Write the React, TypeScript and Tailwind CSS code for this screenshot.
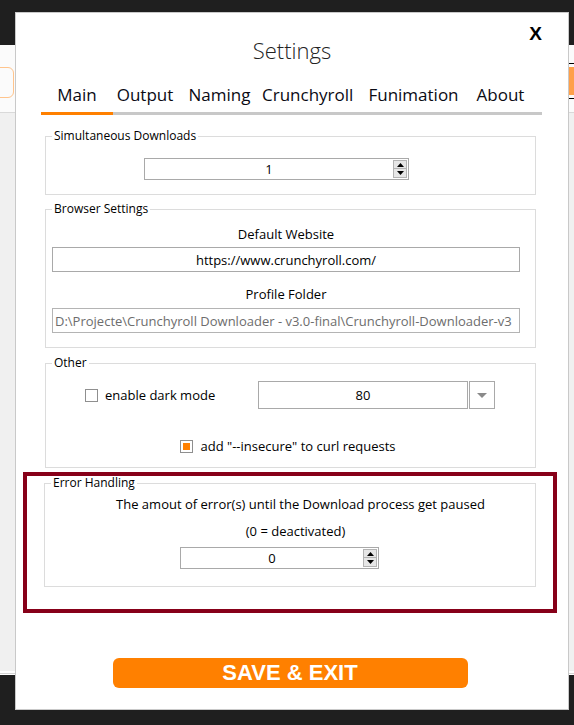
import React from 'react';

const Arrow = ({ up }: { up?: boolean }) => (
  <svg width="7" height="4" viewBox="0 0 7 4" className="block">
    <path d={up ? 'M3.5 0L7 4H0z' : 'M0 0h7L3.5 4z'} fill="#000" />
  </svg>
);

function NumericBox({ value, className }: { value: string; className?: string }) {
  return (
    <div className={`flex h-[22px] items-center border border-[#a9a9a9] bg-white ${className ?? ''}`}>
      <span className="flex-1 text-center text-[13px] leading-none">{value}</span>
      <div className="mr-[1px] flex h-[18px] w-[14px] flex-col">
        <span className="flex h-[9px] items-center justify-center border border-[#b3b3b3] bg-[#e6e6e6]">
          <Arrow up />
        </span>
        <span className="flex h-[9px] items-center justify-center border border-t-0 border-[#b3b3b3] bg-[#e6e6e6]">
          <Arrow />
        </span>
      </div>
    </div>
  );
}

function GroupBox({ title, className, children }: { title: string; className?: string; children: React.ReactNode }) {
  return (
    <fieldset className={`min-w-0 border border-[#dcdcdc] ${className ?? ''}`}>
      <legend className="ml-[6px] px-[2px] text-[12px] leading-[14px] text-black">{title}</legend>
      {children}
    </fieldset>
  );
}

const tabs = [
  { label: 'Main', w: 'w-[72px]' },
  { label: 'Output', w: 'w-[64px]' },
  { label: 'Naming', w: 'w-[85px]' },
  { label: 'Crunchyroll', w: 'w-[91px]' },
  { label: 'Funimation', w: 'w-[121px]' },
  { label: 'About', w: 'w-[53px]' },
];

export default function App() {
  return (
    <div className="relative h-[725px] w-[574px] overflow-hidden bg-[#f0f0f0] font-['Open_Sans',sans-serif] text-black">
      {/* app behind the dialog */}
      <div className="flex h-full flex-col">
        <div className="h-[45px] shrink-0 bg-[#1f1f1f]" />
        <div className="flex h-[68px] shrink-0 items-start justify-between border-b border-[#d9d9d9] bg-[#fbfbfb]">
          <div className="-ml-[8px] mt-[22px] h-[31px] w-[22px] rounded-[6px] border border-[#ffc48c]" />
          <div className="mt-[18px] h-[36px] w-[7px] border-y border-black py-[3px]">
            <div className="ml-[2px] h-full bg-[#ffa04a]" />
          </div>
        </div>
        <div className="flex-1 bg-[#f0f0f0]" />
        <div className="h-[2px] bg-white" />
        <div className="h-[1px] bg-[#d4d4d4]" />
        <div className="h-[1px] bg-white" />
        <div className="h-[50px] shrink-0 bg-[#1f1f1f]" />
      </div>

      {/* settings dialog */}
      <div className="absolute left-[15px] top-[12px] flex h-[698px] w-[554px] flex-col border border-[#c9c9c9] bg-white">
        <button className="absolute right-[26px] top-[11px] font-['Liberation_Sans',Arial,sans-serif] text-[19px] font-bold leading-none text-black">
          X
        </button>

        <h1 className="pt-[22px] text-center text-[22px] font-light leading-[30px] text-[#222]">Settings</h1>

        <div className="ml-[25px] mr-[26px] mt-[18px] flex border-b-[3px] border-[#c8c8c8]">
          {tabs.map((t, i) => (
            <div
              key={t.label}
              className={`-mb-[3px] ${t.w} border-b-[3px] pb-[5px] text-center text-[17px] leading-[24px] text-[#0a0a14] ${
                i === 0 ? 'border-[#ff8000]' : 'border-transparent'
              }`}
            >
              {t.label}
            </div>
          ))}
        </div>

        <div className="ml-[7px] mr-[11px] flex flex-col">
          <GroupBox title="Simultaneous Downloads" className="ml-[22px] mr-[21px] mt-[14px]">
            <div className="flex justify-center pb-[14px] pr-[28px] pt-[15px]">
              <NumericBox value="1" className="w-[265px]" />
            </div>
          </GroupBox>

          <GroupBox title="Browser Settings" className="ml-[22px] mr-[21px] mt-[7px]">
            <div className="flex flex-col pb-[14px] text-[13px] leading-[16px]">
              <div className="mt-[10px] pr-[9px] text-center">Default Website</div>
              <div className="ml-[6px] mr-[15px] mt-[5px] flex h-[25px] items-center justify-center border border-[#a9a9a9]">
                https://www.crunchyroll.com/
              </div>
              <div className="mt-[14px] pr-[9px] text-center">Profile Folder</div>
              <div className="ml-[6px] mr-[15px] mt-[6px] flex h-[25px] min-w-0 items-center overflow-hidden whitespace-nowrap border border-[#b4b4b4] pl-[2px] text-[#6d6d6d]">
                D:\Projecte\Crunchyroll Downloader - v3.0-final\Crunchyroll-Downloader-v3
              </div>
            </div>
          </GroupBox>

          <GroupBox title="Other" className="ml-[22px] mr-[21px] mt-[8px]">
            <div className="flex flex-col pb-[13px] text-[13px] leading-[16px]">
              <div className="mt-[11px] flex h-[28px] items-center">
                <label className="ml-[39px] flex w-[173px] items-center gap-[7px]">
                  <span className="h-[13px] w-[13px] border border-[#8f8f8f] bg-white" />
                  enable dark mode
                </label>
                <div className="flex h-[28px] w-[210px] items-center justify-center border border-[#a9a9a9]">80</div>
                <div className="ml-[1px] flex h-[28px] w-[26px] items-center justify-center border border-[#a9a9a9]">
                  <svg width="10" height="5" viewBox="0 0 10 5">
                    <path d="M0 0h10L5 5z" fill="#8a8a8a" />
                  </svg>
                </div>
              </div>
              <label className="mt-[29px] flex items-center justify-center gap-[7px] pr-[5px]">
                <span className="h-[13px] w-[13px] border border-[#8f8f8f] bg-white p-[2px]">
                  <span className="block h-full w-full bg-[#ff8000]" />
                </span>
                add "--insecure" to curl requests
              </label>
            </div>
          </GroupBox>

          <div className="mt-[4px] border-[4px] border-[#870019] px-[17px] pb-[22px]">
            <GroupBox title="Error Handling">
              <div className="flex flex-col pb-[17px] text-[13px] leading-[16px]">
                <div className="mt-[6px] pl-[21px] text-center">The amout of error(s) until the Download process get paused</div>
                <div className="mt-[11px] pl-[11px] text-center">(0 = deactivated)</div>
                <div className="mt-[8px] flex justify-center pr-[21px]">
                  <NumericBox value="0" className="w-[199px]" />
                </div>
              </div>
            </GroupBox>
          </div>

          <button className="mx-auto mt-[45px] h-[30px] w-[355px] rounded-[6px] bg-[#ff8000] font-['Liberation_Sans',Arial,sans-serif] text-[22px] font-bold leading-[30px] text-white">
            SAVE &amp; EXIT
          </button>
        </div>
      </div>
    </div>
  );
}
